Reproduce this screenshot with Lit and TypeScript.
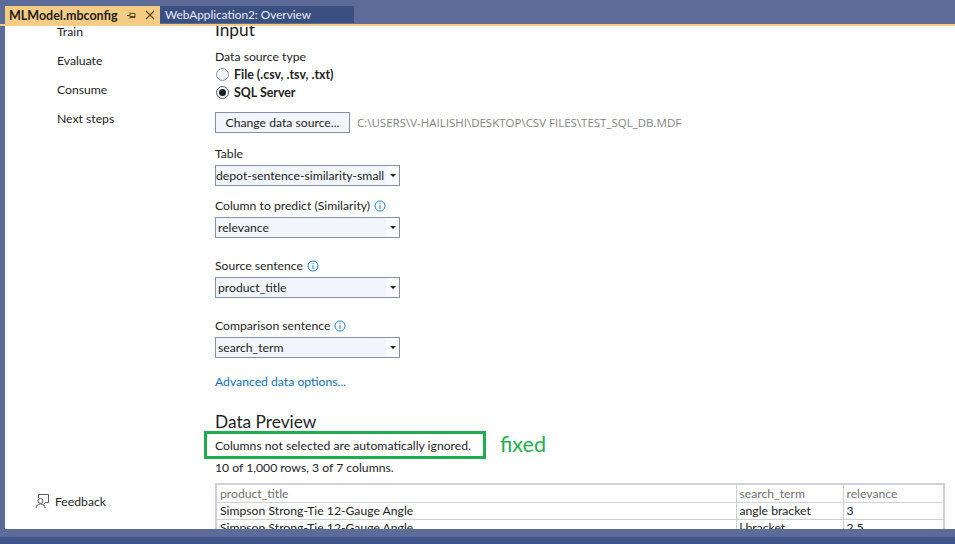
import { LitElement, html, css } from "lit";
import { customElement } from "lit/decorators.js";

const info = html`<svg class="info" width="12" height="12" viewBox="0 0 12 12"><circle cx="6" cy="6" r="5" fill="none" stroke="#1a7fd0" stroke-width="1"/><path d="M6 3v1M6 5v4" stroke="#1a7fd0" stroke-width="1"/></svg>`;

const combo = (text: string, tight = false) => html`<div class="combo ${tight ? "tight" : ""}"><span class="val">${text}</span><span class="arrow"><i></i></span></div>`;

@customElement("app-root")
export class AppRoot extends LitElement {
  static styles = css`
    :host { display: block; width: 955px; height: 544px; overflow: hidden; background: #5d6b99; font-family: "Lato", "Open Sans", sans-serif; font-size: 12.2px; color: #1e1e1e; }
    .tabs { height: 24px; display: flex; align-items: flex-end; padding-left: 5px; box-sizing: border-box; }
    .tab { height: 18px; display: flex; align-items: center; box-sizing: border-box; white-space: nowrap; }
    .active { width: 155px; background: #f5cc84; font-weight: 700; color: #1e1e1e; padding-left: 4px; font-size: 12.5px; }
    .active span { width: 108px; flex: none; }
    .pin { margin-left: 10px; flex: none; } .close { margin-left: 9px; flex: none; }
    .other { width: 194px; height: 17px; margin-bottom: 1px; background: #3b4f81; color: #e6ebf5; padding-left: 5px; font-size: 11.8px; }
    .gold { height: 2px; background: #f5cc84; }
    .body { height: 503px; margin-left: 5px; background: #fff; display: flex; overflow: hidden; }
    .nav { width: 210px; flex: none; display: flex; flex-direction: column; padding-left: 52px; box-sizing: border-box; }
    .steps { display: flex; flex-direction: column; gap: 12px; margin-top: -3px; }
    .steps div { height: 17px; line-height: 17px; }
    .feedback { margin-top: auto; margin-bottom: 19px; margin-left: -22px; display: flex; align-items: center; gap: 5px; height: 17px; }
    .main { flex: 1; min-width: 0; }
    h2 { font-weight: 400; font-size: 17.3px; line-height: 22px; margin: 0; }
    .input { margin-top: -7px; }
    .lbl { line-height: 17px; height: 17px; display: flex; align-items: center; gap: 4px; }
    .first { margin-top: 7px; }
    .radio { display: flex; align-items: center; gap: 5px; height: 18px; font-weight: 700; font-size: 12.4px; }
    .r { width: 11px; height: 11px; border: 1px solid #8a93ab; border-radius: 50%; background: #f2f5fc; display: flex; align-items: center; justify-content: center; box-sizing: content-box; margin-left: 1px; }
    .r.on { border-color: #4d5670; } .r.on i { width: 7px; height: 7px; border-radius: 50%; background: #1e1e1e; }
    .src { display: flex; align-items: center; gap: 7px; margin-top: 11px; }
    .btn { width: 135px; height: 21px; box-sizing: border-box; border: 1px solid #8591a8; background: #f2f5fc; display: flex; align-items: center; justify-content: center; }
    .path { color: #858585; font-family: "Open Sans", sans-serif; font-size: 11.5px; }
    .combo { width: 185px; height: 21px; box-sizing: border-box; border: 1px solid #8591a8; background: #f2f5fc; display: flex; align-items: center; margin-top: 3px; }
    .val { flex: 1; padding-left: 2px; white-space: nowrap; overflow: hidden; min-width: 0; }
    .tight .val { padding-left: 0; }
    .arrow { width: 13px; flex: none; height: 100%; background: #fafbfe; display: flex; align-items: center; justify-content: center; }
    .arrow i { border: 3px solid transparent; border-top: 3px solid #1e1e1e; border-bottom: 0; }
    .f1 { margin-top: 12px; } .f2 { margin-top: 11px; } .f3 { margin-top: 19px; }
    .link { color: #0e70c0; margin-top: 15px; line-height: 17px; }
    .preview { margin-top: 21px; }
    .note { width: 282px; height: 28px; margin-left: -11px; margin-top: -2px; box-sizing: border-box; border: 3px solid #1fad4f; display: flex; align-items: center; padding-left: 8px; flex: none; }
    .noteRow { display: flex; align-items: center; gap: 14px; }
    .fixed { color: #22b14c; font-size: 21.5px; margin-top: -5px; }
    .count { line-height: 17px; }
    table { border-collapse: collapse; border: 2px solid #cdcfe0; margin-top: 7px; width: 728px; table-layout: fixed; }
    td { border: 1px solid #cdcfe0; height: 16px; padding: 0 3px; line-height: 16px; white-space: nowrap; overflow: hidden; }
    .head td { color: #717171; height: 17px; }
    .foot1 { height: 8px; background: #5d6b99; }
    .foot2 { height: 7px; background: #40568d; }
  `;

  render() {
    return html`
      <div class="tabs">
        <div class="tab active"><span>MLModel.mbconfig</span>
          <svg class="pin" width="9" height="9" viewBox="0 0 9 9"><path d="M0 4.500h3M3 1.500v6M3 2.500h5v4H3M3 5.500h5" fill="none" stroke="#5c4a20" stroke-width="1"/></svg>
          <svg class="close" width="10" height="10" viewBox="0 0 10 10"><path d="M1 1l8 8M9 1l-8 8" stroke="#5c4a20" stroke-width="1.200"/></svg>
        </div>
        <div class="tab other">WebApplication2: Overview</div>
      </div>
      <div class="gold"></div>
      <div class="body">
        <div class="nav">
          <div class="steps"><div>Train</div><div>Evaluate</div><div>Consume</div><div>Next steps</div></div>
          <div class="feedback">
            <svg width="15" height="15" viewBox="0 0 15 15" fill="none" stroke="#5a5a5a" stroke-width="1"><path d="M3.500 4V.5h10v8h-3l-2 2"/><circle cx="5.500" cy="7" r="2.500"/><path d="M1 14c0-2.500 2-4 4.500-4s4.500 1.500 4.500 4"/></svg>
            <span>Feedback</span>
          </div>
        </div>
        <div class="main">
          <h2 class="input">Input</h2>
          <div class="lbl first">Data source type</div>
          <div class="radio"><span class="r"></span>File (.csv, .tsv, .txt)</div>
          <div class="radio"><span class="r on"><i></i></span>SQL Server</div>
          <div class="src"><div class="btn">Change data source...</div><span class="path">C:\\USERS\\V-HAILISHI\\DESKTOP\\CSV FILES\\TEST_SQL_DB.MDF</span></div>
          <div class="lbl f1">Table</div>
          ${combo("depot-sentence-similarity-small", true)}
          <div class="lbl f2">Column to predict (Similarity) ${info}</div>
          ${combo("relevance")}
          <div class="lbl f3">Source sentence ${info}</div>
          ${combo("product_title")}
          <div class="lbl f3">Comparison sentence ${info}</div>
          ${combo("search_term")}
          <div class="link">Advanced data options...</div>
          <h2 class="preview">Data Preview</h2>
          <div class="noteRow"><div class="note">Columns not selected are automatically ignored.</div><span class="fixed">fixed</span></div>
          <div class="count">10 of 1,000 rows, 3 of 7 columns.</div>
          <table>
            <colgroup><col style="width:520px"><col style="width:107px"><col style="width:101px"></colgroup>
            <tr class="head"><td>product_title</td><td>search_term</td><td>relevance</td></tr>
            <tr><td>Simpson Strong-Tie 12-Gauge Angle</td><td>angle bracket</td><td>3</td></tr>
            <tr><td>Simpson Strong-Tie 12-Gauge Angle</td><td>l bracket</td><td>2.5</td></tr>
          </table>
        </div>
      </div>
      <div class="foot1"></div>
      <div class="foot2"></div>
    `;
  }
}
